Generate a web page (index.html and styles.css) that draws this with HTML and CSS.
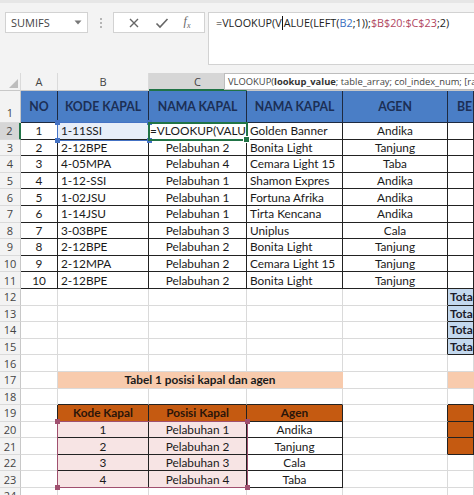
FILE: index.html
```html
<!DOCTYPE html>
<html>
<head>
<meta charset="utf-8">
<link rel="stylesheet" href="styles.css">
</head>
<body>
<div class="app">
  <div class="toolbar">
    <div class="namebox">
      <span>SUMIFS</span>
      <svg class="dd" width="8" height="5" viewBox="0 0 8 5"><path d="M0.5 0.5 L7.5 0.5 L4 4.5 Z" fill="#777"/></svg>
    </div>
    <div class="dots"><i></i><i></i><i></i></div>
    <div class="fxbox">
      <svg width="12" height="12" viewBox="0 0 12 12"><path d="M2 2 L10 10 M10 2 L2 10" stroke="#666" stroke-width="1.4"/></svg>
      <svg width="14" height="12" viewBox="0 0 14 12"><path d="M1.5 6.5 L5 10 L12.5 2" stroke="#666" stroke-width="1.6" fill="none"/></svg>
      <span class="fx">f<sub>x</sub></span>
    </div>
    <div class="formula">=VLOOKUP(V<span class="caret"></span>ALUE(LEFT(<span class="r1">B2</span>;1));<span class="r2">$B$20:$C$23</span>;2)</div>
  </div>

  <div class="sheet">
    <!-- column headers -->
    <div class="ch corner"><svg width="9" height="9" viewBox="0 0 9 9"><path d="M9 0 L9 9 L0 9 Z" fill="#bdbdbd"/></svg></div>
    <div class="ch">A</div><div class="ch">B</div><div class="ch csel">C</div><div class="ch">D</div><div class="ch">E</div><div class="ch">F</div>

    <!-- row 1 -->
    <div class="rh">1</div>
    <div class="c hd">NO</div><div class="c hd">KODE KAPAL</div><div class="c hd">NAMA KAPAL</div><div class="c hd">NAMA KAPAL</div><div class="c hd">AGEN</div><div class="c hd hl">BEFORE</div>

    <!-- row 2 -->
    <div class="rh rsel">2</div>
    <div class="c k ctr">1</div><div class="c k b2">1-11SSI</div><div class="c k edit">=VLOOKUP(VALUE(</div><div class="c k">Golden Banner</div><div class="c k ctr">Andika</div><div class="c k"></div>
    <!-- row 3 -->
    <div class="rh">3</div>
    <div class="c k ctr">2</div><div class="c k">2-12BPE</div><div class="c k ctr">Pelabuhan 2</div><div class="c k">Bonita Light</div><div class="c k ctr">Tanjung</div><div class="c k"></div>
    <!-- row 4 -->
    <div class="rh">4</div>
    <div class="c k ctr">3</div><div class="c k">4-05MPA</div><div class="c k ctr">Pelabuhan 4</div><div class="c k">Cemara Light 15</div><div class="c k ctr">Taba</div><div class="c k"></div>
    <!-- row 5 -->
    <div class="rh">5</div>
    <div class="c k ctr">4</div><div class="c k">1-12-SSI</div><div class="c k ctr">Pelabuhan 1</div><div class="c k">Shamon Expres</div><div class="c k ctr">Andika</div><div class="c k"></div>
    <!-- row 6 -->
    <div class="rh">6</div>
    <div class="c k ctr">5</div><div class="c k">1-02JSU</div><div class="c k ctr">Pelabuhan 1</div><div class="c k">Fortuna Afrika</div><div class="c k ctr">Andika</div><div class="c k"></div>
    <!-- row 7 -->
    <div class="rh">7</div>
    <div class="c k ctr">6</div><div class="c k">1-14JSU</div><div class="c k ctr">Pelabuhan 1</div><div class="c k">Tirta Kencana</div><div class="c k ctr">Andika</div><div class="c k"></div>
    <!-- row 8 -->
    <div class="rh">8</div>
    <div class="c k ctr">7</div><div class="c k">3-03BPE</div><div class="c k ctr">Pelabuhan 3</div><div class="c k">Uniplus</div><div class="c k ctr">Cala</div><div class="c k"></div>
    <!-- row 9 -->
    <div class="rh">9</div>
    <div class="c k ctr">8</div><div class="c k">2-12BPE</div><div class="c k ctr">Pelabuhan 2</div><div class="c k">Bonita Light</div><div class="c k ctr">Tanjung</div><div class="c k"></div>
    <!-- row 10 -->
    <div class="rh">10</div>
    <div class="c k ctr">9</div><div class="c k">2-12MPA</div><div class="c k ctr">Pelabuhan 2</div><div class="c k">Cemara Light 15</div><div class="c k ctr">Tanjung</div><div class="c k"></div>
    <!-- row 11 -->
    <div class="rh">11</div>
    <div class="c k ctr">10</div><div class="c k">2-12BPE</div><div class="c k ctr">Pelabuhan 2</div><div class="c k">Bonita Light</div><div class="c k ctr">Tanjung</div><div class="c k"></div>

    <!-- rows 12-15 -->
    <div class="rh">12</div>
    <div class="c"></div><div class="c"></div><div class="c"></div><div class="c"></div><div class="c kr"></div><div class="c k tota">Total</div>
    <div class="rh">13</div>
    <div class="c"></div><div class="c"></div><div class="c"></div><div class="c"></div><div class="c kr"></div><div class="c k tota">Total</div>
    <div class="rh">14</div>
    <div class="c"></div><div class="c"></div><div class="c"></div><div class="c"></div><div class="c kr"></div><div class="c k tota">Total</div>
    <div class="rh">15</div>
    <div class="c"></div><div class="c"></div><div class="c"></div><div class="c"></div><div class="c kr"></div><div class="c k tota">Total</div>
    <!-- row 16 -->
    <div class="rh">16</div>
    <div class="c"></div><div class="c"></div><div class="c"></div><div class="c"></div><div class="c"></div><div class="c"></div>
    <!-- row 17 -->
    <div class="rh">17</div>
    <div class="c"></div><div class="c peach span3">Tabel 1 posisi kapal dan agen</div><div class="c"></div><div class="c peach"></div>
    <!-- row 18 -->
    <div class="rh">18</div>
    <div class="c"></div><div class="c kb"></div><div class="c kb"></div><div class="c kb"></div><div class="c"></div><div class="c kb"></div>
    <!-- row 19 -->
    <div class="rh">19</div>
    <div class="c kr"></div><div class="c k org">Kode Kapal</div><div class="c k org">Posisi Kapal</div><div class="c k org">Agen</div><div class="c kr"></div><div class="c k org"></div>
    <!-- rows 20-23 -->
    <div class="rh">20</div>
    <div class="c kr"></div><div class="c k pk ctr">1</div><div class="c k pk ctr">Pelabuhan 1</div><div class="c k ctr">Andika</div><div class="c kr"></div><div class="c k org"></div>
    <div class="rh">21</div>
    <div class="c kr"></div><div class="c k pk ctr">2</div><div class="c k pk ctr">Pelabuhan 2</div><div class="c k ctr">Tanjung</div><div class="c kr"></div><div class="c k org"></div>
    <div class="rh">22</div>
    <div class="c kr"></div><div class="c k pk ctr">3</div><div class="c k pk ctr">Pelabuhan 3</div><div class="c k ctr">Cala</div><div class="c"></div><div class="c"></div>
    <div class="rh">23</div>
    <div class="c kr"></div><div class="c k pk ctr">4</div><div class="c k pk ctr">Pelabuhan 4</div><div class="c k ctr">Taba</div><div class="c"></div><div class="c"></div>
    <!-- row 24 -->
    <div class="rh">24</div>
    <div class="c"></div><div class="c"></div><div class="c"></div><div class="c"></div><div class="c"></div><div class="c"></div>

    <!-- overlays -->
    <div class="tip">VLOOKUP(<b>lookup_value</b>; table_array; col_index_num; [range_lookup])</div>
    <div class="selb2"><i class="h tl"></i><i class="h tr"></i><i class="h bl"></i><i class="h br"></i></div>
    <div class="selc2"><i class="fill"></i></div>
    <div class="selrng"><i class="h tl"></i><i class="h tr"></i><i class="h bl"></i><i class="h br"></i></div>
  </div>
</div>
</body>
</html>
```

FILE: styles.css
```css
html, body {
  margin: 0;
  padding: 0;
  background: #ffffff;
}
.app {
  width: 474px;
  height: 495px;
  overflow: hidden;
}
.toolbar {
  height: 73px;
  box-sizing: border-box;
  background: #f3f3f3;
  border-top: 3px solid #e6e6e6;
  display: flex;
  align-items: flex-start;
  padding-top: 9px;
  padding-left: 5px;
  font-family: "Open Sans", "Noto Sans", sans-serif;
}
.namebox {
  width: 83px;
  height: 21px;
  box-sizing: border-box;
  background: #fff;
  border: 1px solid #d2d2d2;
  display: flex;
  align-items: center;
  justify-content: space-between;
  padding: 0 5px 0 5px;
  font-size: 11px;
  color: #444;
}
.dots {
  width: 25px;
  display: flex;
  flex-direction: column;
  align-items: center;
  gap: 2px;
  padding-top: 6px;
}
.dots i {
  width: 2px;
  height: 2px;
  background: #b5b5b5;
  display: block;
}
.fxbox {
  width: 92px;
  height: 21px;
  box-sizing: border-box;
  background: #fff;
  border: 1px solid #d2d2d2;
  display: flex;
  align-items: center;
  justify-content: space-around;
  padding: 0 6px;
}
.fx {
  font-family: "Liberation Serif", serif;
  font-style: italic;
  font-size: 12px;
  color: #666;
}
.fx sub {
  font-size: 8px;
}
.formula {
  margin-left: 3px;
  flex: 1;
  height: 53px;
  box-sizing: border-box;
  background: #fff;
  border: 1px solid #d2d2d2;
  border-right: none;
  padding: 2px 0 0 7px;
  font-size: 10.8px;
  color: #222;
  white-space: nowrap;
  overflow: hidden;
}
.caret {
  display: inline-block;
  width: 1px;
  height: 14px;
  background: #111;
  vertical-align: -3px;
  margin: 0 0.5px;
}
.r1 { color: #3b6fc0; }
.r2 { color: #b1475f; }

.sheet {
  position: relative;
  display: grid;
  grid-template-columns: 21px 37px 91px 98px 96px 105px 26px;
  grid-template-rows: 18px 32px repeat(23, 16.6px);
  font-family: "Lato", "Open Sans", sans-serif;
  font-size: 11.8px;
  color: #1a1a1a;
}
.sheet > div.c, .sheet > div.ch, .sheet > div.rh {
  box-sizing: border-box;
  border-right: 1px solid #dadada;
  border-bottom: 1px solid #dadada;
  display: flex;
  align-items: center;
  white-space: nowrap;
  overflow: hidden;
  padding: 0 3px;
}
.ch {
  background: #f3f3f3;
  justify-content: center;
  color: #444;
  font-family: "Open Sans", sans-serif;
  font-size: 11px;
  border-bottom-color: #c8c8c8 !important;
}
.ch.corner {
  justify-content: flex-end;
  align-items: flex-end !important;
  padding: 0 2px 2px 0 !important;
}
.ch.csel {
  background: #d6d6d6;
  border-bottom: 2px solid #217346 !important;
}
.rh {
  background: #f3f3f3;
  justify-content: center;
  color: #444;
  font-family: "Open Sans", sans-serif;
  font-size: 11px;
  border-right-color: #c8c8c8 !important;
  padding: 0 !important;
}
.rh.rsel {
  background: #d6d6d6;
  border-right: 2px solid #217346 !important;
}
.sheet > .rh:nth-of-type(8) {
  align-items: flex-end;
  padding-bottom: 2px !important;
}
.ctr { justify-content: center; }

.sheet > .c.k {
  border-right-color: #222;
  border-bottom-color: #222;
}
.sheet > .c.kr { border-right-color: #222; }
.sheet > .c.kb { border-bottom-color: #222; }

.hd {
  background: #4a7ec6;
  color: #1c2f55;
  font-weight: 700;
  justify-content: center;
  border-right-color: #1e2a40 !important;
  border-bottom-color: #1e2a40 !important;
  font-size: 12.3px;
}
.hd.hl {
  justify-content: flex-start;
  padding-left: 9px !important;
}
.b2 { background: #e7eef8; }
.edit {
  padding-left: 1px !important;
  overflow: hidden;
}
.tota {
  background: #c3d8ee;
  font-weight: 700;
  color: #1b1b2a;
  padding-left: 2px !important;
}
.peach {
  background: #f8cbad;
  font-weight: 700;
  justify-content: center;
  border-right-color: #f8cbad !important;
}
.span3 { grid-column: span 3; }
.org {
  background: #c55a11;
  color: #2a150a;
  font-weight: 700;
  justify-content: center;
}
.pk { background: #f7e4e4; }

.tip {
  position: absolute;
  left: 224px;
  top: 0px;
  width: 270px;
  height: 17px;
  box-sizing: border-box;
  background: #fff;
  border: 1px solid #bdbdbd;
  font-family: "Open Sans", sans-serif;
  font-size: 9.4px;
  color: #444;
  white-space: nowrap;
  overflow: hidden;
  padding: 0 0 0 3px;
  line-height: 15px;
}
.tip b { color: #333; }

.selb2 {
  position: absolute;
  left: 57px;
  top: 49px;
  width: 93px;
  height: 19px;
  box-sizing: border-box;
  border: 1px solid #4472c4;
}
.selb2 .h { background: #4472c4; }
.selc2 {
  position: absolute;
  left: 148px;
  top: 49px;
  width: 100px;
  height: 19px;
  box-sizing: border-box;
  border: 2px solid #217346;
}
.selc2 .fill {
  position: absolute;
  right: -4px;
  bottom: -4px;
  width: 5px;
  height: 5px;
  background: #217346;
  border: 1px solid #fff;
}
.selrng {
  position: absolute;
  left: 57px;
  top: 348px;
  width: 191px;
  height: 67px;
  box-sizing: border-box;
  border: 1.5px solid #a0506f;
}
.selrng .h { background: #a0506f; }
.h {
  position: absolute;
  width: 5px;
  height: 5px;
  display: block;
}
.h.tl { left: -3px; top: -3px; }
.h.tr { right: -3px; top: -3px; }
.h.bl { left: -3px; bottom: -3px; }
.h.br { right: -3px; bottom: -3px; }
```
